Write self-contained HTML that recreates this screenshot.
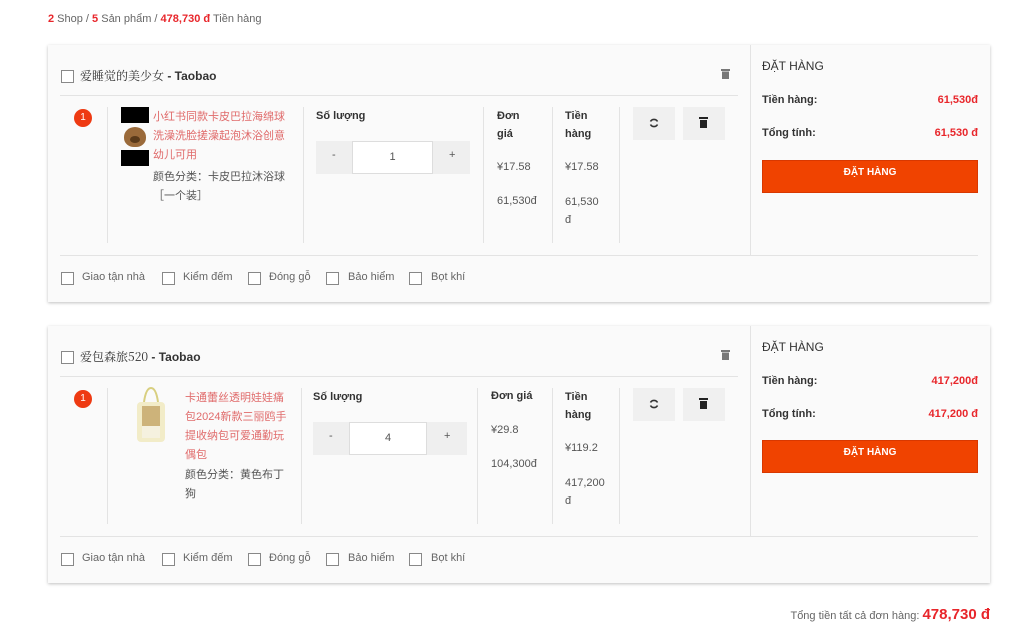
<!DOCTYPE html>
<html><head><meta charset="utf-8">
<style>
*{margin:0;padding:0;box-sizing:border-box}
body{width:1020px;height:638px;background:#fff;font-family:"Liberation Sans","Noto Sans CJK SC",sans-serif;font-size:11px;color:#555;position:relative;overflow:hidden}
.a{position:absolute}
.card{position:absolute;left:48px;width:942px;height:257px;background:#fafafa;box-shadow:0 1px 3px rgba(0,0,0,.25)}
.cb{position:absolute;width:13px;height:13px;border:1px solid #888;background:#fff}
.hl{position:absolute;height:1px;background:#e3e3e3}
.vl{position:absolute;width:1px;background:#e3e3e3}
.red{color:#e8262b}
.b{font-weight:bold;color:#333}
.badge{position:absolute;width:18px;height:18px;border-radius:50%;background:#ee3a12;color:#fff;font-size:10px;text-align:center;line-height:18px}
.pn{color:#e06b6b;line-height:19px}
.qbox{position:absolute;height:33px;background:#efefef}
.qin{position:absolute;background:#fff;border:1px solid #ddd;text-align:center;line-height:31px}
.act{position:absolute;width:42px;height:33px;background:#f0f0f0}
.btn{position:absolute;background:#f04300;color:#fff;font-weight:bold;font-size:10px;text-align:center;line-height:24px;border:1px solid #d83800}
.lbl{position:absolute;font-size:11px;color:#666}
</style></head><body>
<div class="a" style="left:48px;top:13px;font-size:11px;color:#666"><b class="red">2</b> Shop / <b class="red">5</b> Sản phẩm / <b class="red">478,730 đ</b> Tiền hàng</div>

<!-- CARD 1 -->
<div class="card" style="top:45px">
  <div class="cb" style="left:13px;top:25px"></div>
  <div class="a b" style="left:32px;top:22px;font-size:12px"><span style="font-family:'Noto Serif CJK SC',serif;font-weight:normal">爱睡觉的美少女</span> - Taobao</div>
  <svg class="a" style="left:673px;top:23px" width="9" height="11" viewBox="0 0 9 11"><rect x="0" y="1" width="9" height="2" fill="#777"/><rect x="1" y="3.5" width="7" height="7.5" fill="#777"/></svg>
  <div class="hl" style="left:12px;top:50px;width:678px"></div>
  <div class="badge" style="left:26px;top:64px">1</div>
  <div class="vl" style="left:59px;top:62px;height:136px"></div>
  <div class="a" style="left:73px;top:62px;width:28px;height:16px;background:#000"></div>
  <div class="a" style="left:76px;top:82px;width:22px;height:20px;border-radius:50% 50% 45% 45%;background:#9a6a3a"><div class="a" style="left:6px;top:9px;width:10px;height:7px;border-radius:50%;background:#5a3a1a"></div></div>
  <div class="a" style="left:73px;top:105px;width:28px;height:16px;background:#000"></div>
  <div class="a pn" style="left:105px;top:63px;width:140px">小红书同款卡皮巴拉海绵球洗澡洗脸搓澡起泡沐浴创意幼儿可用</div>
  <div class="a" style="left:105px;top:123px;width:140px;line-height:19px;color:#555">颜色分类：卡皮巴拉沐浴球［一个装］</div>
  <div class="vl" style="left:255px;top:62px;height:136px"></div>
  <div class="a b" style="left:268px;top:65px">Số lượng</div>
  <div class="qbox" style="left:268px;top:96px;width:154px"></div>
  <div class="a" style="left:284px;top:104px">-</div>
  <div class="qin" style="left:304px;top:96px;width:81px;height:33px">1</div>
  <div class="a" style="left:401px;top:104px">+</div>
  <div class="vl" style="left:435px;top:62px;height:136px"></div>
  <div class="a b" style="left:449px;top:62px;line-height:18px">Đơn<br>giá</div>
  <div class="a" style="left:449px;top:116px">¥17.58</div>
  <div class="a" style="left:449px;top:150px">61,530đ</div>
  <div class="vl" style="left:504px;top:62px;height:136px"></div>
  <div class="a b" style="left:517px;top:62px;line-height:18px">Tiền<br>hàng</div>
  <div class="a" style="left:517px;top:116px">¥17.58</div>
  <div class="a" style="left:517px;top:148px;line-height:18px">61,530<br>đ</div>
  <div class="vl" style="left:571px;top:62px;height:136px"></div>
  <div class="act" style="left:585px;top:62px"></div>
  <svg class="a" style="left:601px;top:73px" width="10" height="10" viewBox="0 0 10 10"><path d="M8.5 3.5A4 4 0 0 0 1.5 3.5M1.5 6.5A4 4 0 0 0 8.5 6.5" stroke="#333" stroke-width="1.6" fill="none"/></svg>
  <div class="act" style="left:635px;top:62px"></div>
  <svg class="a" style="left:651px;top:72px" width="9" height="11" viewBox="0 0 9 11"><rect x="0" y="0" width="9" height="2" fill="#222"/><rect x="1" y="3" width="7" height="8" fill="#222"/></svg>
  <div class="vl" style="left:702px;top:0;height:210px"></div>
  <div class="a b" style="left:714px;top:14px;font-size:12px;font-weight:normal;color:#333">ĐẶT HÀNG</div>
  <div class="a b" style="left:714px;top:49px">Tiền hàng:</div>
  <div class="a b red" style="left:880px;top:49px;width:50px;text-align:right;color:#e8262b">61,530đ</div>
  <div class="a b" style="left:714px;top:82px">Tổng tính:</div>
  <div class="a b red" style="left:870px;top:82px;width:60px;text-align:right;color:#e8262b">61,530 đ</div>
  <div class="btn" style="left:714px;top:115px;width:216px;height:33px">ĐẶT HÀNG</div>
  <div class="hl" style="left:12px;top:210px;width:918px"></div>
  <div class="cb" style="left:13px;top:227px"></div><div class="lbl" style="left:34px;top:226px">Giao tận nhà</div>
  <div class="cb" style="left:114px;top:227px"></div><div class="lbl" style="left:135px;top:226px">Kiểm đếm</div>
  <div class="cb" style="left:200px;top:227px"></div><div class="lbl" style="left:221px;top:226px">Đóng gỗ</div>
  <div class="cb" style="left:278px;top:227px"></div><div class="lbl" style="left:300px;top:226px">Bảo hiểm</div>
  <div class="cb" style="left:361px;top:227px"></div><div class="lbl" style="left:383px;top:226px">Bọt khí</div>
</div>

<!-- CARD 2 -->
<div class="card" style="top:326px">
  <div class="cb" style="left:13px;top:25px"></div>
  <div class="a b" style="left:32px;top:22px;font-size:12px"><span style="font-family:'Noto Serif CJK SC',serif;font-weight:normal">爱包森旅520</span> - Taobao</div>
  <svg class="a" style="left:673px;top:23px" width="9" height="11" viewBox="0 0 9 11"><rect x="0" y="1" width="9" height="2" fill="#777"/><rect x="1" y="3.5" width="7" height="7.5" fill="#777"/></svg>
  <div class="hl" style="left:12px;top:50px;width:678px"></div>
  <div class="badge" style="left:26px;top:64px">1</div>
  <div class="vl" style="left:59px;top:62px;height:136px"></div>
  <svg class="a" style="left:86px;top:60px" width="34" height="58" viewBox="0 0 34 58"><path d="M10 16 Q12 2 17 2 Q22 2 24 16" stroke="#d8cf80" stroke-width="2" fill="none"/><rect x="3" y="16" width="28" height="40" rx="4" fill="#f2ecc8"/><rect x="8" y="20" width="18" height="22" fill="#cdb37a"/><rect x="8" y="40" width="18" height="12" fill="#f5f1df"/></svg>
  <div class="a pn" style="left:137px;top:63px;width:105px">卡通蕾丝透明娃娃痛包2024新款三丽鸥手提收纳包可爱通勤玩偶包</div>
  <div class="a" style="left:137px;top:140px;width:105px;line-height:19px;color:#555">颜色分类：黄色布丁狗</div>
  <div class="vl" style="left:253px;top:62px;height:136px"></div>
  <div class="a b" style="left:265px;top:65px">Số lượng</div>
  <div class="qbox" style="left:265px;top:96px;width:154px"></div>
  <div class="a" style="left:281px;top:104px">-</div>
  <div class="qin" style="left:301px;top:96px;width:78px;height:33px">4</div>
  <div class="a" style="left:396px;top:104px">+</div>
  <div class="vl" style="left:429px;top:62px;height:136px"></div>
  <div class="a b" style="left:443px;top:64px">Đơn giá</div>
  <div class="a" style="left:443px;top:98px">¥29.8</div>
  <div class="a" style="left:443px;top:132px">104,300đ</div>
  <div class="vl" style="left:504px;top:62px;height:136px"></div>
  <div class="a b" style="left:517px;top:62px;line-height:18px">Tiền<br>hàng</div>
  <div class="a" style="left:517px;top:116px">¥119.2</div>
  <div class="a" style="left:517px;top:148px;line-height:18px">417,200<br>đ</div>
  <div class="vl" style="left:571px;top:62px;height:136px"></div>
  <div class="act" style="left:585px;top:62px"></div>
  <svg class="a" style="left:601px;top:73px" width="10" height="10" viewBox="0 0 10 10"><path d="M8.5 3.5A4 4 0 0 0 1.5 3.5M1.5 6.5A4 4 0 0 0 8.5 6.5" stroke="#333" stroke-width="1.6" fill="none"/></svg>
  <div class="act" style="left:635px;top:62px"></div>
  <svg class="a" style="left:651px;top:72px" width="9" height="11" viewBox="0 0 9 11"><rect x="0" y="0" width="9" height="2" fill="#222"/><rect x="1" y="3" width="7" height="8" fill="#222"/></svg>
  <div class="vl" style="left:702px;top:0;height:210px"></div>
  <div class="a b" style="left:714px;top:14px;font-size:12px;font-weight:normal;color:#333">ĐẶT HÀNG</div>
  <div class="a b" style="left:714px;top:49px">Tiền hàng:</div>
  <div class="a b" style="left:870px;top:49px;width:60px;text-align:right;color:#e8262b">417,200đ</div>
  <div class="a b" style="left:714px;top:82px">Tổng tính:</div>
  <div class="a b" style="left:860px;top:82px;width:70px;text-align:right;color:#e8262b">417,200 đ</div>
  <div class="btn" style="left:714px;top:114px;width:216px;height:33px">ĐẶT HÀNG</div>
  <div class="hl" style="left:12px;top:210px;width:918px"></div>
  <div class="cb" style="left:13px;top:227px"></div><div class="lbl" style="left:34px;top:226px">Giao tận nhà</div>
  <div class="cb" style="left:114px;top:227px"></div><div class="lbl" style="left:135px;top:226px">Kiểm đếm</div>
  <div class="cb" style="left:200px;top:227px"></div><div class="lbl" style="left:221px;top:226px">Đóng gỗ</div>
  <div class="cb" style="left:278px;top:227px"></div><div class="lbl" style="left:300px;top:226px">Bảo hiểm</div>
  <div class="cb" style="left:361px;top:227px"></div><div class="lbl" style="left:383px;top:226px">Bọt khí</div>
</div>

<div class="a" style="right:30px;top:606px;color:#666;font-size:11px;white-space:nowrap">Tổng tiền tất cả đơn hàng: <b style="color:#e8262b;font-size:15px">478,730 đ</b></div>
</body></html>
